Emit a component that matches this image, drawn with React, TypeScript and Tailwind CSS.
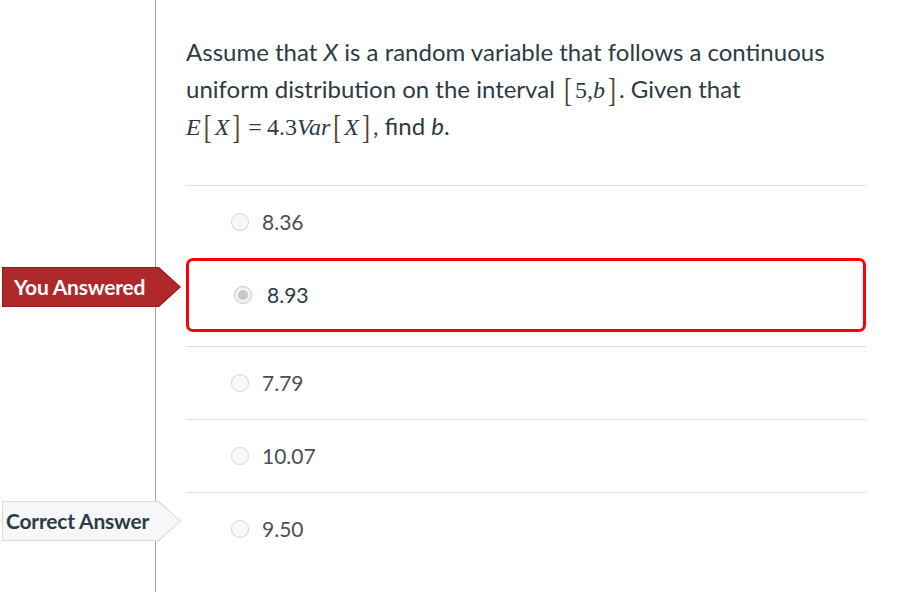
const font = { fontFamily: "Lato, 'Open Sans', sans-serif" };

function Radio({ selected }: { selected?: boolean }) {
  return (
    <span
      className={
        "flex h-[18px] w-[18px] items-center justify-center rounded-full border " +
        (selected ? "border-[#c9c9c9] bg-[#f3f3f3]" : "border-[#d4d4d4] bg-[#f8f8f8]")
      }
    >
      {selected && <span className="h-[10px] w-[10px] rounded-full bg-[#c8c8c8]" />}
    </span>
  );
}

function Ribbon({ label, dark }: { label: string; dark?: boolean }) {
  const shape = "[clip-path:polygon(0_0,calc(100%-22px)_0,100%_50%,calc(100%-22px)_100%,0_100%)]";
  return (
    <div className={`absolute left-[-184px] h-[40px] w-[179px] ${shape} ${dark ? "bg-[#8e1c1a]" : "bg-[#dadada]"}`}>
      <div
        className={`absolute inset-[1px] ${shape} flex items-center ${
          dark ? "bg-[#b0292a] pl-[11px] text-white" : "bg-[#f7f7f7] pl-[3px] text-[#2d3b45]"
        } text-[21px] font-bold tracking-[-0.2px]`}
        style={font}
      >
        {label}
      </div>
    </div>
  );
}

function Bracket({ children }: { children: string }) {
  return <span className="mx-[3px] inline-block origin-center scale-y-[1.4] text-[#4f4538]">{children}</span>;
}

const answers = [
  { value: "8.36" },
  { value: "8.93", picked: true },
  { value: "7.79" },
  { value: "10.07" },
  { value: "9.50", correct: true },
];

export default function App() {
  return (
    <div className="flex min-h-[592px] bg-white text-[#2d3b45]" style={font}>
      <div className="w-[156px] shrink-0 border-r border-[#a9a9a9]" />
      <div className="w-[710px] pl-[30px]">
        <p className="pt-[33px] text-[24px] leading-[37px]">
          Assume that <i>X</i> is a random variable that follows a continuous uniform distribution on the interval{" "}
          <span className="font-['Liberation_Serif',serif] text-[24px] leading-none">
            <Bracket>[</Bracket>5,<i>b</i>
            <Bracket>]</Bracket>
          </span>
          . Given that
          <br />
          <span className="font-['Liberation_Serif',serif] text-[24px] leading-none">
            <i>E</i>
            <Bracket>[</Bracket>
            <i>X</i>
            <Bracket>]</Bracket>
            <span className="mx-[5px]">=</span>4.3<i>Var</i>
            <Bracket>[</Bracket>
            <i>X</i>
            <Bracket>]</Bracket>
          </span>
          , find <i>b</i>.
        </p>
        <div className="mt-[41px]">
          {answers.map((a) =>
            a.picked ? (
              <div key={a.value} className="relative mb-[14px]">
                <div className="absolute top-[9px] left-0">
                  <Ribbon label="You Answered" dark />
                </div>
                <div className="flex h-[74px] items-center rounded-[7px] border-[3px] border-[#ff0000] pl-[45px]">
                  <Radio selected />
                  <span className="ml-[15px] text-[21px] text-[#2d3b45]">{a.value}</span>
                </div>
              </div>
            ) : (
              <div
                key={a.value}
                className={
                  "relative flex h-[73px] items-center pl-[45px] " +
                  (a.value === "8.36" ? "border-t border-[#e2e2e2]" : "border-t border-[#dddddd]")
                }
              >
                {a.correct && (
                  <div className="absolute top-[8px] left-0">
                    <Ribbon label="Correct Answer" />
                  </div>
                )}
                <Radio />
                <span className="ml-[13px] text-[21px] text-[#4a4f55]">{a.value}</span>
              </div>
            )
          )}
        </div>
      </div>
    </div>
  );
}
